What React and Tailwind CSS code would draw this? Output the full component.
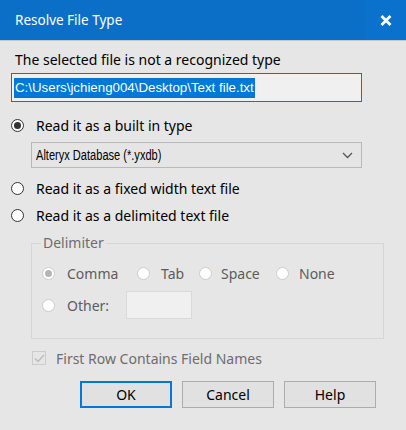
import React from "react";

const ui = { fontFamily: '"Noto Sans", "Open Sans", sans-serif' };
const ms = { fontFamily: '"Liberation Sans", Arial, sans-serif' };

const Radio = ({ checked, disabled }) => (
  <span
    className={`relative inline-flex items-center justify-center w-[13px] h-[13px] rounded-full border shrink-0 ${
      disabled ? "border-[#cccccc] bg-white" : "border-[#333333] bg-white"
    }`}
  >
    {checked && (
      <span className={`w-[7px] h-[7px] rounded-full ${disabled ? "bg-[#b4b4b4]" : "bg-[#333333]"}`} />
    )}
  </span>
);

const Button = ({ label, primary }) => (
  <button
    className={`w-[92px] h-[27px] flex items-center justify-center text-[14px] text-black bg-[#e1e1e1] ${
      primary ? "border-2 border-[#0078d7]" : "border border-[#adadad]"
    }`}
    style={ui}
  >
    {label}
  </button>
);

export default function App() {
  return (
    <div className="w-[406px] h-[430px] bg-[#e6e6e6] flex flex-col overflow-hidden" style={ui}>
      <div className="h-[41px] bg-[#0b6fc8] flex items-center justify-between border-b border-[#c9c9c9]">
        <span className="pl-[15px] text-white text-[13.5px]">Resolve File Type</span>
        <span className="w-[41px] h-full flex items-center justify-center bg-[#0a71cd]">
          <svg width="12" height="11" viewBox="0 0 12 11">
            <path d="M1.5 1 L10.5 10 M10.5 1 L1.5 10" stroke="white" strokeWidth="2.8" />
          </svg>
        </span>
      </div>

      <div className="flex flex-col pt-[9px] px-[11px] text-[14px] text-black">
        <div className="h-[20px] leading-[20px] pl-[4px]">The selected file is not a recognized type</div>
        <div className="mt-[3px] w-[351px] h-[29px] border border-[#0078d7] bg-[#f0f0f0] flex items-center pl-[2px]">
          <span className="bg-[#0078d7] text-white text-[13.3px] leading-[20px] px-[1px]" style={ms}>
            C:\Users\jchieng004\Desktop\Text file.txt
          </span>
        </div>

        <div className="mt-[13px] h-[20px] flex items-center gap-[12px]">
          <Radio checked />
          <span>Read it as a built in type</span>
        </div>
        <div className="mt-[7px] ml-[20px] w-[331px] h-[26px] border border-[#b9b9b9] bg-[#e5e5e5] flex items-center justify-between pl-[4px] pr-[8px]">
          <span className="text-[14px] origin-left scale-x-[0.79]" style={ms}>Alteryx Database (*.yxdb)</span>
          <svg width="11" height="7" viewBox="0 0 11 7">
            <path d="M1 1 L5.5 5.5 L10 1" fill="none" stroke="#555" strokeWidth="1.3" />
          </svg>
        </div>
        <div className="mt-[10px] h-[20px] flex items-center gap-[12px]">
          <Radio />
          <span>Read it as a fixed width text file</span>
        </div>
        <div className="mt-[7px] h-[20px] flex items-center gap-[12px]">
          <Radio />
          <span>Read it as a delimited text file</span>
        </div>

        <div className="relative mt-[18px] ml-[20px] w-[353px] h-[96px] border border-[#d6d6d6] flex flex-col pl-[10px] pt-[19px] text-[#5c5c5c]">
          <span className="absolute left-[9px] top-[-11px] px-[2px] bg-[#e6e6e6] text-[#6d6d6d] leading-[20px]">Delimiter</span>
          <div className="h-[20px] flex items-center">
            <div className="w-[95px] flex items-center gap-[12px]">
              <Radio checked disabled />
              <span>Comma</span>
            </div>
            <div className="w-[62px] flex items-center gap-[11px]">
              <Radio disabled />
              <span>Tab</span>
            </div>
            <div className="w-[77px] flex items-center gap-[9px]">
              <Radio disabled />
              <span>Space</span>
            </div>
            <div className="flex items-center gap-[10px]">
              <Radio disabled />
              <span>None</span>
            </div>
          </div>
          <div className="mt-[8px] h-[28px] flex items-center">
            <div className="w-[84px] flex items-center gap-[12px]">
              <Radio disabled />
              <span>Other:</span>
            </div>
            <div className="w-[66px] h-[28px] border border-[#d9d9d9] bg-[#f0f0f0]" />
          </div>
        </div>

        <div className="mt-[9px] ml-[21px] h-[20px] flex items-center gap-[10px] text-[#6d6d6d]">
          <span className="w-[14px] h-[14px] border border-[#cccccc] bg-[#e6e6e6] flex items-center justify-center">
            <svg width="11" height="9" viewBox="0 0 11 9">
              <path d="M1 4.5 L4 7.5 L10 1" fill="none" stroke="#bcbcbc" strokeWidth="1.5" />
            </svg>
          </span>
          <span>First Row Contains Field Names</span>
        </div>

        <div className="mt-[13px] ml-[69px] flex gap-[10px]">
          <Button label="OK" primary />
          <Button label="Cancel" />
          <Button label="Help" />
        </div>
      </div>
    </div>
  );
}
